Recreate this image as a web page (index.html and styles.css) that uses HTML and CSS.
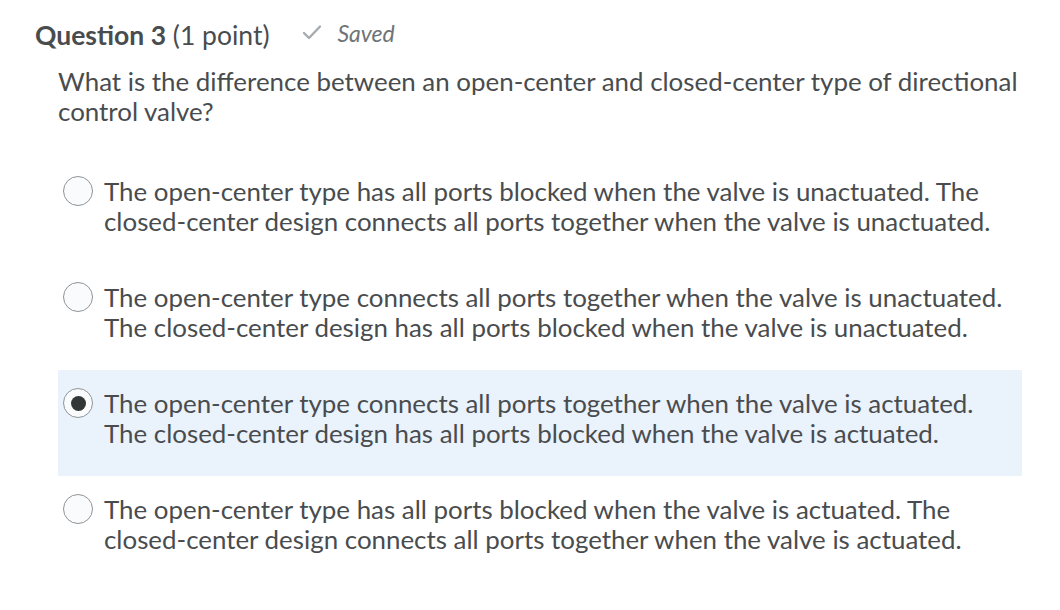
FILE: index.html
```html
<!DOCTYPE html>
<html>
<head>
<meta charset="utf-8">
<link rel="stylesheet" href="styles.css">
</head>
<body>
<div class="question">
  <div class="q-header">
    <h2 class="q-title"><strong>Question 3</strong> (1 point)</h2>
    <span class="saved">
      <svg class="check" width="20" height="17" viewBox="0 0 20 17"><path d="M2 9 L7 14 L18 2.5" fill="none" stroke="#a6abaf" stroke-width="2.4" stroke-linecap="round" stroke-linejoin="round"/></svg>
      <em>Saved</em>
    </span>
  </div>
  <div class="q-body">
    <p class="q-text">What is the difference between an open-center and closed-center type of directional control valve?</p>
    <div class="options">
      <label class="option">
        <span class="radio"></span>
        <span class="opt-text">The open-center type has all ports blocked when the valve is unactuated. The closed-center design connects all ports together when the valve is unactuated.</span>
      </label>
      <label class="option">
        <span class="radio"></span>
        <span class="opt-text">The open-center type connects all ports together when the valve is unactuated. The closed-center design has all ports blocked when the valve is unactuated.</span>
      </label>
      <label class="option selected">
        <span class="radio checked"></span>
        <span class="opt-text">The open-center type connects all ports together when the valve is actuated. The closed-center design has all ports blocked when the valve is actuated.</span>
      </label>
      <label class="option">
        <span class="radio"></span>
        <span class="opt-text">The open-center type has all ports blocked when the valve is actuated. The closed-center design connects all ports together when the valve is actuated.</span>
      </label>
    </div>
  </div>
</div>
</body>
</html>
```

FILE: styles.css
```css
html, body {
  margin: 0;
  padding: 0;
  background: #ffffff;
}
body {
  font-family: Lato, "Open Sans", sans-serif;
  color: #494c4e;
}
.question {
  padding: 18px 38px 0 35px;
}
.q-header {
  display: flex;
  align-items: center;
  gap: 33px;
  height: 34px;
}
.q-title {
  margin: 0;
  font-size: 26.5px;
  font-weight: 400;
  line-height: 34px;
}
.q-title strong {
  font-weight: 700;
}
.saved {
  display: flex;
  align-items: center;
  gap: 15px;
  color: #6e7376;
  font-size: 23px;
  margin-top: -5px;
}
.saved em {
  font-style: italic;
}
.q-body {
  padding-left: 23px;
}
.q-text {
  margin: 14px 0 0 0;
  font-size: 25.9px;
  line-height: 30px;
}
.options {
  margin-top: 32px;
}
.option {
  display: flex;
  align-items: flex-start;
  gap: 11px;
  padding: 18px 4px 28px 5px;
  font-size: 25.9px;
  line-height: 30px;
}
.option.selected {
  background: #eaf2fc;
}
.radio {
  flex: none;
  box-sizing: border-box;
  width: 30px;
  height: 30px;
  border-radius: 50%;
  border: 1.5px solid #8f9497;
  background: #fafbfd;
  display: flex;
  align-items: center;
  justify-content: center;
}
.radio.checked::after {
  content: "";
  width: 15px;
  height: 15px;
  border-radius: 50%;
  background: #333637;
}
```
